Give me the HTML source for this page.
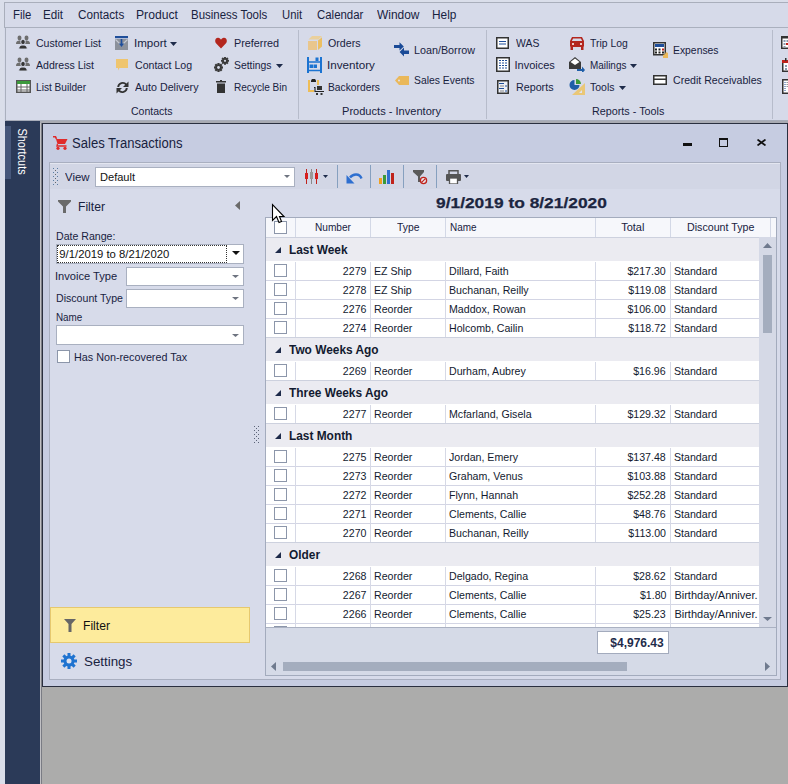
<!DOCTYPE html><html><head><meta charset="utf-8"><style>
html,body{margin:0;padding:0;width:788px;height:784px;overflow:hidden;background:#dfe3ef;}
body{position:relative;font-family:"Liberation Sans",sans-serif;}
.t{position:absolute;white-space:nowrap;}
.r{position:absolute;box-sizing:border-box;}
</style></head><body>
<div class="r" style="left:0px;top:0px;width:788px;height:784px;background:#dadeea"></div>
<div class="r" style="left:4px;top:2px;width:784px;height:119px;background:#d6dae9"></div>
<div class="r" style="left:4px;top:2px;width:784px;height:1px;background:#a9aebb"></div>
<div class="r" style="left:4px;top:2px;width:1px;height:25px;background:#a9aebb"></div>
<div class="r" style="left:4px;top:27px;width:784px;height:1px;background:#aab0be"></div>
<div class="r" style="left:5px;top:27px;width:1px;height:94px;background:#aab0be"></div>
<div class="r" style="left:5px;top:120px;width:783px;height:1px;background:#a8adba"></div>
<div class="t" style="left:12.59px;transform-origin:0 0;top:9.00px;font-size:12.5px;line-height:12.5px;font-weight:normal;color:#18223f;transform:scaleX(0.9067);">File</div>
<div class="t" style="left:43.27px;transform-origin:0 0;top:9.00px;font-size:12.5px;line-height:12.5px;font-weight:normal;color:#18223f;transform:scaleX(0.9304);">Edit</div>
<div class="t" style="left:77.60px;transform-origin:0 0;top:9.00px;font-size:12.5px;line-height:12.5px;font-weight:normal;color:#18223f;transform:scaleX(0.9373);">Contacts</div>
<div class="t" style="left:136.43px;transform-origin:0 0;top:9.00px;font-size:12.5px;line-height:12.5px;font-weight:normal;color:#18223f;transform:scaleX(0.9717);">Product</div>
<div class="t" style="left:191.48px;transform-origin:0 0;top:9.00px;font-size:12.5px;line-height:12.5px;font-weight:normal;color:#18223f;transform:scaleX(0.9169);">Business Tools</div>
<div class="t" style="left:282.00px;transform-origin:0 0;top:9.00px;font-size:12.5px;line-height:12.5px;font-weight:normal;color:#18223f;transform:scaleX(0.9009);">Unit</div>
<div class="t" style="left:316.80px;transform-origin:0 0;top:9.00px;font-size:12.5px;line-height:12.5px;font-weight:normal;color:#18223f;transform:scaleX(0.9137);">Calendar</div>
<div class="t" style="left:376.50px;transform-origin:0 0;top:9.00px;font-size:12.5px;line-height:12.5px;font-weight:normal;color:#18223f;transform:scaleX(0.9553);">Window</div>
<div class="t" style="left:432.45px;transform-origin:0 0;top:9.00px;font-size:12.5px;line-height:12.5px;font-weight:normal;color:#18223f;transform:scaleX(0.9493);">Help</div>
<div class="t" style="left:35.60px;transform-origin:0 0;top:38.00px;font-size:11px;line-height:11px;font-weight:normal;color:#18223f;transform:scaleX(0.9587);">Customer List</div>
<div class="t" style="left:35.60px;transform-origin:0 0;top:60.00px;font-size:11px;line-height:11px;font-weight:normal;color:#18223f;transform:scaleX(0.9591);">Address List</div>
<div class="t" style="left:35.60px;transform-origin:0 0;top:82.00px;font-size:11px;line-height:11px;font-weight:normal;color:#18223f;transform:scaleX(0.9205);">List Builder</div>
<div class="t" style="left:133.75px;transform-origin:0 0;top:38.00px;font-size:11px;line-height:11px;font-weight:normal;color:#18223f;transform:scaleX(1.0525);">Import</div>
<div class="t" style="left:135.00px;transform-origin:0 0;top:60.00px;font-size:11px;line-height:11px;font-weight:normal;color:#18223f;transform:scaleX(0.9628);">Contact Log</div>
<div class="t" style="left:135.00px;transform-origin:0 0;top:82.00px;font-size:11px;line-height:11px;font-weight:normal;color:#18223f;transform:scaleX(0.9710);">Auto Delivery</div>
<div class="t" style="left:233.80px;transform-origin:0 0;top:38.00px;font-size:11px;line-height:11px;font-weight:normal;color:#18223f;transform:scaleX(0.9839);">Preferred</div>
<div class="t" style="left:234.00px;transform-origin:0 0;top:60.00px;font-size:11px;line-height:11px;font-weight:normal;color:#18223f;transform:scaleX(0.9442);">Settings</div>
<div class="t" style="left:234.00px;transform-origin:0 0;top:82.00px;font-size:11px;line-height:11px;font-weight:normal;color:#18223f;transform:scaleX(0.9144);">Recycle Bin</div>
<div class="t" style="left:327.60px;transform-origin:0 0;top:38.00px;font-size:11px;line-height:11px;font-weight:normal;color:#18223f;transform:scaleX(0.9672);">Orders</div>
<div class="t" style="left:326.54px;transform-origin:0 0;top:60.00px;font-size:11px;line-height:11px;font-weight:normal;color:#18223f;transform:scaleX(1.0593);">Inventory</div>
<div class="t" style="left:327.60px;transform-origin:0 0;top:82.00px;font-size:11px;line-height:11px;font-weight:normal;color:#18223f;transform:scaleX(0.9335);">Backorders</div>
<div class="t" style="left:414.40px;transform-origin:0 0;top:45.00px;font-size:11px;line-height:11px;font-weight:normal;color:#18223f;transform:scaleX(0.9772);">Loan/Borrow</div>
<div class="t" style="left:414.40px;transform-origin:0 0;top:75.00px;font-size:11px;line-height:11px;font-weight:normal;color:#18223f;transform:scaleX(0.9428);">Sales Events</div>
<div class="t" style="left:515.50px;transform-origin:0 0;top:38.00px;font-size:11px;line-height:11px;font-weight:normal;color:#18223f;transform:scaleX(0.9461);">WAS</div>
<div class="t" style="left:514.50px;transform-origin:0 0;top:60.00px;font-size:11px;line-height:11px;font-weight:normal;color:#18223f;">Invoices</div>
<div class="t" style="left:515.50px;transform-origin:0 0;top:82.00px;font-size:11px;line-height:11px;font-weight:normal;color:#18223f;transform:scaleX(0.9740);">Reports</div>
<div class="t" style="left:589.60px;transform-origin:0 0;top:38.00px;font-size:11px;line-height:11px;font-weight:normal;color:#18223f;transform:scaleX(0.9441);">Trip Log</div>
<div class="t" style="left:589.60px;transform-origin:0 0;top:60.00px;font-size:11px;line-height:11px;font-weight:normal;color:#18223f;transform:scaleX(0.9009);">Mailings</div>
<div class="t" style="left:589.60px;transform-origin:0 0;top:82.00px;font-size:11px;line-height:11px;font-weight:normal;color:#18223f;transform:scaleX(0.9550);">Tools</div>
<div class="t" style="left:672.50px;transform-origin:0 0;top:45.00px;font-size:11px;line-height:11px;font-weight:normal;color:#18223f;transform:scaleX(0.9425);">Expenses</div>
<div class="t" style="left:672.50px;transform-origin:0 0;top:75.00px;font-size:11px;line-height:11px;font-weight:normal;color:#18223f;transform:scaleX(0.9621);">Credit Receivables</div>
<svg class="r" style="left:170px;top:42px" width="7" height="4" viewBox="0 0 7 4"><path d="M0 0h7L3.5 4z" fill="#1e2b4a"/></svg>
<svg class="r" style="left:276px;top:64px" width="7" height="4" viewBox="0 0 7 4"><path d="M0 0h7L3.5 4z" fill="#1e2b4a"/></svg>
<svg class="r" style="left:630px;top:64px" width="7" height="4" viewBox="0 0 7 4"><path d="M0 0h7L3.5 4z" fill="#1e2b4a"/></svg>
<svg class="r" style="left:619px;top:86px" width="7" height="4" viewBox="0 0 7 4"><path d="M0 0h7L3.5 4z" fill="#1e2b4a"/></svg>
<div class="t" style="left:131.00px;transform-origin:0 0;top:106.00px;font-size:11px;line-height:11px;font-weight:normal;color:#18223f;transform:scaleX(0.9565);">Contacts</div>
<div class="t" style="left:341.50px;transform-origin:0 0;top:106.00px;font-size:11px;line-height:11px;font-weight:normal;color:#18223f;transform:scaleX(1.0058);">Products - Inventory</div>
<div class="t" style="left:592.40px;transform-origin:0 0;top:106.00px;font-size:11px;line-height:11px;font-weight:normal;color:#18223f;transform:scaleX(0.9803);">Reports - Tools</div>
<div class="r" style="left:298px;top:30px;width:1px;height:89px;background:#b7bccb"></div>
<div class="r" style="left:486px;top:30px;width:1px;height:89px;background:#b7bccb"></div>
<div class="r" style="left:772px;top:30px;width:1px;height:89px;background:#b7bccb"></div>
<svg class="r" style="left:15px;top:35px" width="16" height="15" viewBox="0 0 16 15"><ellipse cx="4.5" cy="3" rx="2" ry="2.4" fill="#6e6e6e"/><path d="M1 9C1 6.5 2.5 5.6 4.5 5.6S8 6.5 8 9Z" fill="#6e6e6e"/>
<ellipse cx="11.5" cy="3" rx="2" ry="2.4" fill="#6e6e6e"/><path d="M8 9C8 6.5 9.5 5.6 11.5 5.6S15 6.5 15 9Z" fill="#6e6e6e"/>
<g stroke="#d6dae9" stroke-width="0.9"><ellipse cx="8" cy="7" rx="2.3" ry="2.6" fill="#353535"/><path d="M3.8 14C3.8 11 5.5 10 8 10S12.2 11 12.2 14Z" fill="#353535"/></g></svg>
<svg class="r" style="left:15px;top:57px" width="16" height="15" viewBox="0 0 16 15"><ellipse cx="4.5" cy="3" rx="2" ry="2.4" fill="#6e6e6e"/><path d="M1 9C1 6.5 2.5 5.6 4.5 5.6S8 6.5 8 9Z" fill="#6e6e6e"/>
<ellipse cx="11.5" cy="3" rx="2" ry="2.4" fill="#6e6e6e"/><path d="M8 9C8 6.5 9.5 5.6 11.5 5.6S15 6.5 15 9Z" fill="#6e6e6e"/>
<g stroke="#d6dae9" stroke-width="0.9"><ellipse cx="8" cy="7" rx="2.3" ry="2.6" fill="#353535"/><path d="M3.8 14C3.8 11 5.5 10 8 10S12.2 11 12.2 14Z" fill="#353535"/></g></svg>
<svg class="r" style="left:16px;top:80px" width="15" height="13" viewBox="0 0 15 13"><rect x="0.75" y="0.75" width="13.5" height="11.5" fill="#fff" stroke="#555" stroke-width="1.5"/><rect x="1" y="1" width="13" height="3" fill="#3d9a3d"/><path d="M1 7h13M1 10h13M5 4v8M11 4v8" stroke="#666" stroke-width="1"/></svg>
<svg class="r" style="left:115px;top:36px" width="13" height="14" viewBox="0 0 13 14"><rect x="0" y="0" width="13" height="2.2" fill="#1f4e9a"/><rect x="0" y="3" width="13" height="11" fill="#8c919b"/><path d="M0.5 3.5L6.5 9.5 12.5 3.5" stroke="#c5c9d2" stroke-width="1.2" fill="none"/><path d="M6.5 3v6" stroke="#1f4e9a" stroke-width="1.6"/><path d="M3.8 7.5h5.4L6.5 11z" fill="#1f4e9a"/></svg>
<svg class="r" style="left:116px;top:59px" width="12" height="12" viewBox="0 0 12 12"><path d="M0 0h12v9H3.5l-1.5 2.5V9H0z" fill="#efc56f"/></svg>
<svg class="r" style="left:116px;top:81px" width="13" height="13" viewBox="0 0 13 13"><g fill="none" stroke="#333" stroke-width="1.9"><path d="M2.2 6A4.5 4.5 0 0 1 10.2 3.6"/><path d="M10.8 7A4.5 4.5 0 0 1 2.8 9.4"/></g><path d="M12.5 0.5V6H7z" fill="#333"/><path d="M0.5 12.5V7H6z" fill="#333"/></svg>
<svg class="r" style="left:215px;top:37px" width="12" height="12" viewBox="0 0 12 12"><path d="M6 11.5L1 6.2C-0.5 4.5 0 1 3 0.8 4.5 0.7 5.5 1.8 6 2.8 6.5 1.8 7.5 0.7 9 0.8 12 1 12.5 4.5 11 6.2z" fill="#b3261e"/></svg>
<svg class="r" style="left:214px;top:57px" width="15" height="15" viewBox="0 0 15 15"><circle cx="4.5" cy="10.5" r="3.3" fill="#3a3a3a"/><rect x="3.4" y="6.0" width="2.2" height="2.2" fill="#3a3a3a" transform="rotate(0.0 4.5 10.5)"/><rect x="3.4" y="6.0" width="2.2" height="2.2" fill="#3a3a3a" transform="rotate(45.0 4.5 10.5)"/><rect x="3.4" y="6.0" width="2.2" height="2.2" fill="#3a3a3a" transform="rotate(90.0 4.5 10.5)"/><rect x="3.4" y="6.0" width="2.2" height="2.2" fill="#3a3a3a" transform="rotate(135.0 4.5 10.5)"/><rect x="3.4" y="6.0" width="2.2" height="2.2" fill="#3a3a3a" transform="rotate(180.0 4.5 10.5)"/><rect x="3.4" y="6.0" width="2.2" height="2.2" fill="#3a3a3a" transform="rotate(225.0 4.5 10.5)"/><rect x="3.4" y="6.0" width="2.2" height="2.2" fill="#3a3a3a" transform="rotate(270.0 4.5 10.5)"/><rect x="3.4" y="6.0" width="2.2" height="2.2" fill="#3a3a3a" transform="rotate(315.0 4.5 10.5)"/><circle cx="4.5" cy="10.5" r="1.4" fill="#d6dae9"/><circle cx="11" cy="3.8" r="2.9" fill="#3a3a3a"/><rect x="10.05" y="-0.20000000000000018" width="1.9" height="2.1" fill="#3a3a3a" transform="rotate(0.0 11 3.8)"/><rect x="10.05" y="-0.20000000000000018" width="1.9" height="2.1" fill="#3a3a3a" transform="rotate(45.0 11 3.8)"/><rect x="10.05" y="-0.20000000000000018" width="1.9" height="2.1" fill="#3a3a3a" transform="rotate(90.0 11 3.8)"/><rect x="10.05" y="-0.20000000000000018" width="1.9" height="2.1" fill="#3a3a3a" transform="rotate(135.0 11 3.8)"/><rect x="10.05" y="-0.20000000000000018" width="1.9" height="2.1" fill="#3a3a3a" transform="rotate(180.0 11 3.8)"/><rect x="10.05" y="-0.20000000000000018" width="1.9" height="2.1" fill="#3a3a3a" transform="rotate(225.0 11 3.8)"/><rect x="10.05" y="-0.20000000000000018" width="1.9" height="2.1" fill="#3a3a3a" transform="rotate(270.0 11 3.8)"/><rect x="10.05" y="-0.20000000000000018" width="1.9" height="2.1" fill="#3a3a3a" transform="rotate(315.0 11 3.8)"/><circle cx="11" cy="3.8" r="1.1" fill="#d6dae9"/></svg>
<svg class="r" style="left:216px;top:80px" width="10" height="13" viewBox="0 0 10 13"><rect x="0" y="1" width="10" height="1.5" fill="#333"/><rect x="4" y="0" width="2" height="1" fill="#333"/><rect x="1" y="3.5" width="8" height="9.5" fill="#333"/></svg>
<svg class="r" style="left:308px;top:36px" width="14" height="14" viewBox="0 0 14 14"><path d="M0.5 3.6L4 0H14L10.5 3.6Z" fill="#ead09c"/><rect x="0" y="5" width="9" height="9" fill="#e9c68c"/><path d="M10 4.6L14 1.3V10.5L10 14Z" fill="#ecbf62"/></svg>
<svg class="r" style="left:307px;top:57px" width="15" height="16" viewBox="0 0 15 16"><path d="M1 0v16M14 0v16" stroke="#1b73d1" stroke-width="2"/><path d="M1 5h13M1 13.5h13" stroke="#1b73d1" stroke-width="1.7"/><rect x="8.5" y="0.5" width="3" height="3.5" fill="#1b73d1"/><rect x="2.5" y="7.5" width="3.5" height="3.5" fill="#1b73d1"/><rect x="6.5" y="7.5" width="3.5" height="3.5" fill="#1b73d1"/></svg>
<svg class="r" style="left:308px;top:79px" width="16" height="17" viewBox="0 0 16 17"><path d="M0 1h2v12H0zM0 11h6v2H0zM9 1h2v5H9z" fill="#eebd57"/><path d="M3 3h5V1.6L7 0H4L3 1.6z" fill="#222"/><path d="M6 8.5h1v4h9" stroke="#222" stroke-width="1.1" fill="none"/><rect x="9" y="7" width="5" height="4" fill="#333"/><rect x="8" y="14" width="2" height="2" fill="#333"/><rect x="12.5" y="14" width="2" height="2" fill="#333"/></svg>
<svg class="r" style="left:394px;top:42px" width="15" height="15" viewBox="0 0 15 15"><path d="M0 3H5.5V0.3L9.8 4.6 5.5 8.6V6H0z" fill="#1a4a97"/><path d="M15 8.6H10V5.6L5.6 10 10 14.4V12H15z" fill="#1a4a97"/></svg>
<svg class="r" style="left:395px;top:76px" width="14" height="9" viewBox="0 0 14 9"><path d="M0 4.5L4 0h10v9H4z" fill="#eab85a"/><circle cx="4" cy="4.5" r="1" fill="#dfe3ef"/></svg>
<svg class="r" style="left:496px;top:37px" width="13" height="12" viewBox="0 0 13 12"><rect x="0.75" y="0.75" width="11.5" height="10.5" fill="#fff" stroke="#333" stroke-width="1.5"/><path d="M3 4.5h7M3 7h7" stroke="#1f4e9a" stroke-width="1.2"/></svg>
<svg class="r" style="left:496px;top:57px" width="14" height="15" viewBox="0 0 14 15"><rect x="0.75" y="0.75" width="12.5" height="13.5" fill="#fff" stroke="#333" stroke-width="1.5"/><path d="M3 3.5h8M3 6h8M3 8.5h8M3 11h8" stroke="#1f4e9a" stroke-width="1.1" stroke-dasharray="2 1"/></svg>
<svg class="r" style="left:497px;top:80px" width="12" height="14" viewBox="0 0 12 14"><rect x="0.75" y="0.75" width="10.5" height="12.5" fill="#eef0f6" stroke="#333" stroke-width="1.5"/><path d="M2 3.5h5M2 8.5h5M8 6h2M8 11h2" stroke="#1f4e9a" stroke-width="1.2"/><path d="M3 6h4M3 11h4" stroke="#888" stroke-width="1.1"/></svg>
<svg class="r" style="left:570px;top:37px" width="14" height="13" viewBox="0 0 14 13"><path d="M2.5 0.8h9l2 4H0.5z" fill="none" stroke="#b3261e" stroke-width="1.6"/><rect x="0" y="4.5" width="14" height="5.5" rx="1" fill="#b3261e"/><rect x="0.5" y="10" width="2.5" height="3" fill="#b3261e"/><rect x="11" y="10" width="2.5" height="3" fill="#b3261e"/><circle cx="3" cy="7" r="1" fill="#fff"/><circle cx="11" cy="7" r="1" fill="#fff"/></svg>
<svg class="r" style="left:569px;top:57px" width="16" height="15" viewBox="0 0 16 15"><path d="M0 5L6 0l6 5v7H0z" fill="#3a3a3a"/><path d="M1.5 5L6 1.5 10.5 5 6 8z" fill="#fff"/><path d="M8 12h5v-2.5l3 3.5-3 3.5V14H8z" fill="#1f5ea8"/></svg>
<svg class="r" style="left:569px;top:79px" width="16" height="16" viewBox="0 0 16 16"><path d="M5.5 1a5 5 0 1 0 5 5h-5z" fill="#1f5ea8"/><path d="M7 0a5 5 0 0 1 5 5H7z" fill="#3a9a3a"/><path d="M16 4v12H3z" fill="#eac777"/><path d="M13 11v3h-3z" fill="#dfe3ef"/></svg>
<svg class="r" style="left:653px;top:42px" width="15" height="16" viewBox="0 0 15 16"><rect x="0.75" y="0.75" width="11.5" height="12" fill="#fff" stroke="#333" stroke-width="1.5"/><rect x="2" y="2" width="9" height="3" fill="#1f4e9a"/><rect x="2" y="6.5" width="2" height="2" fill="#222"/><rect x="5.5" y="6.5" width="2" height="2" fill="#222"/><rect x="9" y="6.5" width="2" height="2" fill="#c0231b"/><rect x="2" y="9.5" width="2" height="2" fill="#222"/><rect x="5.5" y="9.5" width="2" height="2" fill="#222"/><rect x="9" y="9.5" width="2" height="2" fill="#222"/><path d="M10 16v-3l2-1 1-2 2 1v5z" fill="#eab85a"/></svg>
<svg class="r" style="left:653px;top:75px" width="14" height="10" viewBox="0 0 14 10"><rect x="0.75" y="0.75" width="12.5" height="8.5" fill="#fff" stroke="#333" stroke-width="1.5"/><rect x="1" y="3.5" width="12" height="1.5" fill="#333"/></svg>
<svg class="r" style="left:781px;top:36px" width="7" height="13" viewBox="0 0 7 13"><rect x="0.75" y="0.75" width="12" height="11.5" fill="#fff" stroke="#333" stroke-width="1.5"/><rect x="0" y="0" width="13" height="2.5" fill="#333"/><rect x="2.5" y="4" width="2" height="2" fill="#8a9ab0"/><rect x="5.5" y="4" width="2" height="2" fill="#8a9ab0"/><rect x="2.5" y="7" width="2" height="2" fill="#8a9ab0"/><rect x="5" y="7" width="3" height="2" fill="#c0231b"/><rect x="2.5" y="10" width="2" height="1.5" fill="#8a9ab0"/></svg>
<svg class="r" style="left:782px;top:58px" width="6" height="14" viewBox="0 0 6 14"><rect x="0.75" y="2.75" width="12" height="10.5" fill="#fff" stroke="#333" stroke-width="1.5"/><rect x="0" y="2" width="13" height="3" fill="#c0231b"/><rect x="3" y="0" width="1.5" height="3" fill="#333"/><rect x="3" y="7" width="2" height="2" fill="#8a9ab0"/><rect x="3" y="10" width="2" height="2" fill="#8a9ab0"/></svg>
<svg class="r" style="left:782px;top:79px" width="6" height="15" viewBox="0 0 6 15"><rect x="0.75" y="0.75" width="12" height="13.5" fill="#fff" stroke="#333" stroke-width="1.5"/><path d="M2.5 3.5h1M2.5 5.5h1M2.5 7.5h1M2.5 9.5h1M2.5 11.5h1" stroke="#1f4e9a" stroke-width="1.2"/><path d="M4.5 3.5h3M4.5 5.5h3M4.5 7.5h3" stroke="#999" stroke-width="1"/></svg>
<div class="r" style="left:5px;top:121px;width:35px;height:663px;background:#2b3a58"></div>
<div class="r" style="left:5px;top:126px;width:6px;height:53px;background:#46577a"></div>
<div class="t" style="left:0;top:0;font-size:12px;line-height:12px;color:#fff;transform-origin:0 0;transform:translate(28px,128.5px) rotate(90deg) scaleX(0.91);">Shortcuts</div>
<div class="r" style="left:40px;top:121px;width:1px;height:663px;background:#c0c0c4"></div>
<div class="r" style="left:41px;top:121px;width:1px;height:663px;background:#7a7c84"></div>
<div class="r" style="left:42px;top:687px;width:746px;height:97px;background:#acacab"></div>
<div class="r" style="left:42px;top:123px;width:746px;height:564px;background:#2a2f3f"></div>
<div class="r" style="left:43px;top:124px;width:744px;height:562px;background:#c6cce1"></div>
<div class="r" style="left:40px;top:121px;width:748px;height:2px;background:#a8aab2"></div>
<svg class="r" style="left:53px;top:136px" width="15" height="14" viewBox="0 0 15 14"><path d="M0 0.8h2.5l1 2" stroke="#e02a2a" stroke-width="1.6" fill="none"/><path d="M3 3h11.5l-2.5 5H4.5z" fill="#e02a2a"/><path d="M4.5 8l-0.5 2h9.5" stroke="#e02a2a" stroke-width="1.4" fill="none"/><circle cx="5" cy="12.3" r="1.6" fill="#e02a2a"/><circle cx="12" cy="12.3" r="1.6" fill="#e02a2a"/></svg>
<div class="t" style="left:72.20px;transform-origin:0 0;top:136.00px;font-size:14px;line-height:14px;font-weight:normal;color:#18223f;transform:scaleX(0.9339);">Sales Transactions</div>
<div class="r" style="left:683px;top:143px;width:9px;height:3px;background:#111"></div>
<div class="r" style="left:719px;top:138px;width:9px;height:9px;border:2px solid #111;border-width:2px 1.5px 1.5px 1.5px"></div>
<svg class="r" style="left:757px;top:139px" width="9" height="7" viewBox="0 0 9 7"><path d="M0.5 0.5l8 6M8.5 0.5l-8 6" stroke="#111" stroke-width="1.7"/></svg>
<div class="r" style="left:49px;top:162px;width:732px;height:518px;background:#d7dbea;border:1px solid #a9afc0"></div>
<div class="r" style="left:50px;top:163px;width:730px;height:1px;background:#e3e6f0"></div>
<div class="r" style="left:50px;top:164px;width:730px;height:25px;background:#d2d6e5"></div>
<div class="r" style="left:53px;top:168px;width:1px;height:1px;background:#5a7da3"></div>
<div class="r" style="left:57px;top:168px;width:1px;height:1px;background:#5a7da3"></div>
<div class="r" style="left:53px;top:172px;width:1px;height:1px;background:#5a7da3"></div>
<div class="r" style="left:57px;top:172px;width:1px;height:1px;background:#5a7da3"></div>
<div class="r" style="left:53px;top:176px;width:1px;height:1px;background:#5a7da3"></div>
<div class="r" style="left:57px;top:176px;width:1px;height:1px;background:#5a7da3"></div>
<div class="r" style="left:53px;top:180px;width:1px;height:1px;background:#5a7da3"></div>
<div class="r" style="left:57px;top:180px;width:1px;height:1px;background:#5a7da3"></div>
<div class="r" style="left:53px;top:184px;width:1px;height:1px;background:#5a7da3"></div>
<div class="r" style="left:57px;top:184px;width:1px;height:1px;background:#5a7da3"></div>
<div class="r" style="left:55px;top:170px;width:1px;height:1px;background:#666"></div>
<div class="r" style="left:55px;top:174px;width:1px;height:1px;background:#666"></div>
<div class="r" style="left:55px;top:178px;width:1px;height:1px;background:#666"></div>
<div class="r" style="left:55px;top:182px;width:1px;height:1px;background:#666"></div>
<div class="t" style="left:65.10px;transform-origin:0 0;top:172.00px;font-size:11px;line-height:11px;font-weight:normal;color:#18223f;transform:scaleX(1.0380);">View</div>
<div class="r" style="left:95px;top:167px;width:200px;height:20px;background:#fff;border:1px solid #a9b0c0"></div>
<div class="t" style="left:99.60px;transform-origin:0 0;top:172.00px;font-size:11px;line-height:11px;font-weight:normal;color:#111;transform:scaleX(1.0058);">Default</div>
<svg class="r" style="left:284px;top:175px" width="6" height="3" viewBox="0 0 6 3"><path d="M0 0h6L3 3z" fill="#6e7480"/></svg>
<svg class="r" style="left:304px;top:169px" width="16" height="15" viewBox="0 0 16 15"><path d="M2.5 0v15M7.5 0v15M12.5 0v15" stroke="#c0231b" stroke-width="1"/><path d="M7.5 0v15" stroke="#8a8a8a" stroke-width="1"/><rect x="1" y="4" width="3" height="6" fill="#d62020"/><rect x="6" y="3" width="3" height="7" fill="#9a9a9a"/><rect x="11" y="4" width="3" height="6" fill="#d62020"/></svg>
<svg class="r" style="left:323px;top:175px" width="5" height="3" viewBox="0 0 5 3"><path d="M0 0h5L2.5 3z" fill="#1e2b4a"/></svg>
<div class="r" style="left:337px;top:165px;width:1px;height:23px;background:#86a0bf"></div>
<div class="r" style="left:370px;top:165px;width:1px;height:23px;background:#86a0bf"></div>
<div class="r" style="left:403px;top:165px;width:1px;height:23px;background:#86a0bf"></div>
<div class="r" style="left:436px;top:165px;width:1px;height:23px;background:#86a0bf"></div>
<svg class="r" style="left:346px;top:172px" width="17" height="12" viewBox="0 0 17 12"><path d="M4 5.5C7 1.5 13.5 1 15.5 6.5" stroke="#2e6fd0" stroke-width="2.4" fill="none"/><path d="M0.5 3v8.5h8z" fill="#2e6fd0"/></svg>
<svg class="r" style="left:379px;top:170px" width="16" height="14" viewBox="0 0 16 14"><rect x="0" y="8" width="3" height="6" fill="#f0a020"/><rect x="4" y="5" width="3" height="9" fill="#3a9a3a"/><rect x="8" y="0" width="3" height="14" fill="#2e6fd0"/><rect x="12" y="3" width="3" height="11" fill="#c0231b"/></svg>
<svg class="r" style="left:412px;top:170px" width="16" height="15" viewBox="0 0 16 15"><path d="M1 0H12V2L8 6.5V12H6V6.5L1 2Z" fill="#5a5a5a"/><circle cx="11.5" cy="10.5" r="3.1" fill="#e8eaf2" stroke="#c0231b" stroke-width="1.3"/><path d="M9.6 12.4l3.8-3.8" stroke="#c0231b" stroke-width="1.2"/></svg>
<svg class="r" style="left:446px;top:170px" width="15" height="14" viewBox="0 0 15 14"><rect x="3" y="0.75" width="9" height="4" fill="none" stroke="#555" stroke-width="1.5"/><rect x="0" y="4" width="15" height="7" rx="1" fill="#555"/><rect x="3.5" y="8" width="8" height="6" fill="#fff" stroke="#555" stroke-width="1.3"/></svg>
<svg class="r" style="left:464px;top:175px" width="5" height="3" viewBox="0 0 5 3"><path d="M0 0h5L2.5 3z" fill="#1e2b4a"/></svg>
<svg class="r" style="left:58px;top:200px" width="13" height="13" viewBox="0 0 13 13"><path d="M0 0H13V1.5L8 6.5V13H5V6.5L0 1.5Z" fill="#6a6a6a"/></svg>
<div class="t" style="left:77.67px;transform-origin:0 0;top:200.00px;font-size:13px;line-height:13px;font-weight:normal;color:#18223f;transform:scaleX(0.9349);">Filter</div>
<svg class="r" style="left:235px;top:201px" width="5" height="9" viewBox="0 0 5 9"><path d="M5 0v9L0 4.5z" fill="#6a6a6a"/></svg>
<div class="t" style="left:56.10px;transform-origin:0 0;top:231.00px;font-size:11px;line-height:11px;font-weight:normal;color:#18223f;transform:scaleX(0.9626);">Date Range:</div>
<div class="r" style="left:56px;top:244px;width:188px;height:20px;background:#fff;border:1px solid #a9b0c0"></div>
<div class="r" style="left:57px;top:245px;width:170px;height:18px;border:1px dotted #333"></div>
<div class="t" style="left:59.30px;transform-origin:0 0;top:249.00px;font-size:11.3px;line-height:11.3px;font-weight:normal;color:#111;">9/1/2019 to 8/21/2020</div>
<svg class="r" style="left:232px;top:251px" width="8" height="4" viewBox="0 0 8 4"><path d="M0 0h8L4 4z" fill="#111"/></svg>
<div class="t" style="left:54.99px;transform-origin:0 0;top:271.00px;font-size:11px;line-height:11px;font-weight:normal;color:#18223f;transform:scaleX(1.0109);">Invoice Type</div>
<div class="r" style="left:126px;top:267px;width:118px;height:19px;background:#fff;border:1px solid #a9b0c0"></div>
<svg class="r" style="left:232px;top:275px" width="7" height="3" viewBox="0 0 7 3"><path d="M0 0h7L3.5 3z" fill="#6e7480"/></svg>
<div class="t" style="left:56.00px;transform-origin:0 0;top:293.00px;font-size:11px;line-height:11px;font-weight:normal;color:#18223f;transform:scaleX(0.9629);">Discount Type</div>
<div class="r" style="left:126px;top:289px;width:118px;height:19px;background:#fff;border:1px solid #a9b0c0"></div>
<svg class="r" style="left:232px;top:297px" width="7" height="3" viewBox="0 0 7 3"><path d="M0 0h7L3.5 3z" fill="#6e7480"/></svg>
<div class="t" style="left:56.00px;transform-origin:0 0;top:312.00px;font-size:11px;line-height:11px;font-weight:normal;color:#18223f;transform:scaleX(0.8965);">Name</div>
<div class="r" style="left:56px;top:325px;width:188px;height:20px;background:#fff;border:1px solid #a9b0c0"></div>
<svg class="r" style="left:232px;top:334px" width="7" height="3" viewBox="0 0 7 3"><path d="M0 0h7L3.5 3z" fill="#6e7480"/></svg>
<div class="r" style="left:57px;top:350px;width:13px;height:13px;background:#fff;border:1px solid #8c96aa"></div>
<div class="t" style="left:73.60px;transform-origin:0 0;top:352.00px;font-size:11px;line-height:11px;font-weight:normal;color:#18223f;transform:scaleX(0.9798);">Has Non-recovered Tax</div>
<div class="r" style="left:254px;top:426px;width:1px;height:1px;background:#5c6478"></div>
<div class="r" style="left:258px;top:426px;width:1px;height:1px;background:#5c6478"></div>
<div class="r" style="left:254px;top:430px;width:1px;height:1px;background:#5c6478"></div>
<div class="r" style="left:258px;top:430px;width:1px;height:1px;background:#5c6478"></div>
<div class="r" style="left:254px;top:434px;width:1px;height:1px;background:#5c6478"></div>
<div class="r" style="left:258px;top:434px;width:1px;height:1px;background:#5c6478"></div>
<div class="r" style="left:254px;top:438px;width:1px;height:1px;background:#5c6478"></div>
<div class="r" style="left:258px;top:438px;width:1px;height:1px;background:#5c6478"></div>
<div class="r" style="left:254px;top:442px;width:1px;height:1px;background:#5c6478"></div>
<div class="r" style="left:258px;top:442px;width:1px;height:1px;background:#5c6478"></div>
<div class="r" style="left:256px;top:428px;width:1px;height:1px;background:#5c6478"></div>
<div class="r" style="left:256px;top:432px;width:1px;height:1px;background:#5c6478"></div>
<div class="r" style="left:256px;top:436px;width:1px;height:1px;background:#5c6478"></div>
<div class="r" style="left:256px;top:440px;width:1px;height:1px;background:#5c6478"></div>
<div class="r" style="left:50px;top:607px;width:200px;height:36px;background:#fdeb9c;border:1px solid #e6c86e"></div>
<svg class="r" style="left:64px;top:619px" width="12" height="13" viewBox="0 0 12 13"><path d="M0 0h12L7.5 5v8H4.5V5z" fill="#666"/></svg>
<div class="t" style="left:82.97px;transform-origin:0 0;top:619.00px;font-size:13px;line-height:13px;font-weight:normal;color:#111;transform:scaleX(0.9349);">Filter</div>
<svg class="r" style="left:61px;top:653px" width="16" height="16" viewBox="0 0 16 16"><g fill="#1f73d0"><circle cx="8" cy="8" r="5.5"/><rect x="6.5" y="0" width="3" height="16"/><rect x="0" y="6.5" width="16" height="3"/><rect x="6.5" y="0" width="3" height="16" transform="rotate(45 8 8)"/><rect x="6.5" y="0" width="3" height="16" transform="rotate(-45 8 8)"/></g><circle cx="8" cy="8" r="2.5" fill="#dde1ee"/></svg>
<div class="t" style="left:83.50px;transform-origin:0 0;top:655.00px;font-size:13.5px;line-height:13.5px;font-weight:normal;color:#18223f;transform:scaleX(0.9872);">Settings</div>
<div class="t" style="left:435.50px;transform-origin:0 0;top:195.00px;font-size:15px;line-height:15px;font-weight:bold;color:#1c2540;transform:scaleX(1.1577);-webkit-text-stroke:0.25px #1c2540">9/1/2019 to 8/21/2020</div>
<div class="r" style="left:265px;top:217px;width:512px;height:459px;background:#d5dae7;border:1px solid #a3abbd"></div>
<div class="r" style="left:266px;top:218px;width:510px;height:19px;background:#f6f7fb"></div>
<div class="r" style="left:266px;top:237px;width:510px;height:1px;background:#c9cede"></div>
<div class="r" style="left:295px;top:218px;width:1px;height:19px;background:#d3d8e6"></div>
<div class="r" style="left:370px;top:218px;width:1px;height:19px;background:#d3d8e6"></div>
<div class="r" style="left:445px;top:218px;width:1px;height:19px;background:#d3d8e6"></div>
<div class="r" style="left:595px;top:218px;width:1px;height:19px;background:#d3d8e6"></div>
<div class="r" style="left:670px;top:218px;width:1px;height:19px;background:#d3d8e6"></div>
<div class="r" style="left:770px;top:218px;width:1px;height:19px;background:#d3d8e6"></div>
<div class="r" style="left:274px;top:221px;width:13px;height:13px;background:#fff;border:1px solid #8c96aa"></div>
<div class="t" style="left:314.50px;transform-origin:0 0;top:222.00px;font-size:11px;line-height:11px;font-weight:normal;color:#18223f;transform:scaleX(0.9199);">Number</div>
<div class="t" style="left:396.50px;transform-origin:0 0;top:222.00px;font-size:11px;line-height:11px;font-weight:normal;color:#18223f;transform:scaleX(0.9397);">Type</div>
<div class="t" style="left:449.60px;transform-origin:0 0;top:222.00px;font-size:11px;line-height:11px;font-weight:normal;color:#18223f;transform:scaleX(0.9033);">Name</div>
<div class="t" style="left:621.20px;transform-origin:0 0;top:222.00px;font-size:11px;line-height:11px;font-weight:normal;color:#18223f;">Total</div>
<div class="t" style="left:686.80px;transform-origin:0 0;top:222.00px;font-size:11px;line-height:11px;font-weight:normal;color:#18223f;transform:scaleX(0.9686);">Discount Type</div>
<div class="r" style="left:266px;top:237px;width:494px;height:390px;overflow:hidden">
<div class="r" style="left:0px;top:0px;width:494px;height:24px;background:#ebebf1"></div>
<div class="r" style="left:0px;top:24px;width:494px;height:19px;background:#fff"></div>
<div class="r" style="left:0px;top:43px;width:494px;height:19px;background:#fff"></div>
<div class="r" style="left:0px;top:62px;width:494px;height:19px;background:#fff"></div>
<div class="r" style="left:0px;top:81px;width:494px;height:19px;background:#fff"></div>
<div class="r" style="left:0px;top:100px;width:494px;height:24px;background:#ebebf1"></div>
<div class="r" style="left:0px;top:124px;width:494px;height:19px;background:#fff"></div>
<div class="r" style="left:0px;top:143px;width:494px;height:24px;background:#ebebf1"></div>
<div class="r" style="left:0px;top:167px;width:494px;height:19px;background:#fff"></div>
<div class="r" style="left:0px;top:186px;width:494px;height:24px;background:#ebebf1"></div>
<div class="r" style="left:0px;top:210px;width:494px;height:19px;background:#fff"></div>
<div class="r" style="left:0px;top:229px;width:494px;height:19px;background:#fff"></div>
<div class="r" style="left:0px;top:248px;width:494px;height:19px;background:#fff"></div>
<div class="r" style="left:0px;top:267px;width:494px;height:19px;background:#fff"></div>
<div class="r" style="left:0px;top:286px;width:494px;height:19px;background:#fff"></div>
<div class="r" style="left:0px;top:305px;width:494px;height:24px;background:#ebebf1"></div>
<div class="r" style="left:0px;top:329px;width:494px;height:19px;background:#fff"></div>
<div class="r" style="left:0px;top:348px;width:494px;height:19px;background:#fff"></div>
<div class="r" style="left:0px;top:367px;width:494px;height:19px;background:#fff"></div>
<div class="r" style="left:0px;top:386px;width:494px;height:19px;background:#fff"></div>
<div class="r" style="left:0px;top:405px;width:494px;height:19px;background:#fff"></div>
<div class="r" style="left:0px;top:0px;width:494px;height:1px;background:#cdd1de"></div>
<div class="r" style="left:0px;top:43px;width:494px;height:1px;background:#d3d5e4"></div>
<div class="r" style="left:29px;top:25px;width:1px;height:19px;background:#d6d9e6"></div>
<div class="r" style="left:104px;top:25px;width:1px;height:19px;background:#d6d9e6"></div>
<div class="r" style="left:179px;top:25px;width:1px;height:19px;background:#d6d9e6"></div>
<div class="r" style="left:329px;top:25px;width:1px;height:19px;background:#d6d9e6"></div>
<div class="r" style="left:404px;top:25px;width:1px;height:19px;background:#d6d9e6"></div>
<div class="r" style="left:0px;top:62px;width:494px;height:1px;background:#d3d5e4"></div>
<div class="r" style="left:29px;top:44px;width:1px;height:19px;background:#d6d9e6"></div>
<div class="r" style="left:104px;top:44px;width:1px;height:19px;background:#d6d9e6"></div>
<div class="r" style="left:179px;top:44px;width:1px;height:19px;background:#d6d9e6"></div>
<div class="r" style="left:329px;top:44px;width:1px;height:19px;background:#d6d9e6"></div>
<div class="r" style="left:404px;top:44px;width:1px;height:19px;background:#d6d9e6"></div>
<div class="r" style="left:0px;top:81px;width:494px;height:1px;background:#d3d5e4"></div>
<div class="r" style="left:29px;top:63px;width:1px;height:19px;background:#d6d9e6"></div>
<div class="r" style="left:104px;top:63px;width:1px;height:19px;background:#d6d9e6"></div>
<div class="r" style="left:179px;top:63px;width:1px;height:19px;background:#d6d9e6"></div>
<div class="r" style="left:329px;top:63px;width:1px;height:19px;background:#d6d9e6"></div>
<div class="r" style="left:404px;top:63px;width:1px;height:19px;background:#d6d9e6"></div>
<div class="r" style="left:0px;top:100px;width:494px;height:1px;background:#d3d5e4"></div>
<div class="r" style="left:29px;top:82px;width:1px;height:19px;background:#d6d9e6"></div>
<div class="r" style="left:104px;top:82px;width:1px;height:19px;background:#d6d9e6"></div>
<div class="r" style="left:179px;top:82px;width:1px;height:19px;background:#d6d9e6"></div>
<div class="r" style="left:329px;top:82px;width:1px;height:19px;background:#d6d9e6"></div>
<div class="r" style="left:404px;top:82px;width:1px;height:19px;background:#d6d9e6"></div>
<div class="r" style="left:0px;top:100px;width:494px;height:1px;background:#cdd1de"></div>
<div class="r" style="left:0px;top:143px;width:494px;height:1px;background:#d3d5e4"></div>
<div class="r" style="left:29px;top:125px;width:1px;height:19px;background:#d6d9e6"></div>
<div class="r" style="left:104px;top:125px;width:1px;height:19px;background:#d6d9e6"></div>
<div class="r" style="left:179px;top:125px;width:1px;height:19px;background:#d6d9e6"></div>
<div class="r" style="left:329px;top:125px;width:1px;height:19px;background:#d6d9e6"></div>
<div class="r" style="left:404px;top:125px;width:1px;height:19px;background:#d6d9e6"></div>
<div class="r" style="left:0px;top:143px;width:494px;height:1px;background:#cdd1de"></div>
<div class="r" style="left:0px;top:186px;width:494px;height:1px;background:#d3d5e4"></div>
<div class="r" style="left:29px;top:168px;width:1px;height:19px;background:#d6d9e6"></div>
<div class="r" style="left:104px;top:168px;width:1px;height:19px;background:#d6d9e6"></div>
<div class="r" style="left:179px;top:168px;width:1px;height:19px;background:#d6d9e6"></div>
<div class="r" style="left:329px;top:168px;width:1px;height:19px;background:#d6d9e6"></div>
<div class="r" style="left:404px;top:168px;width:1px;height:19px;background:#d6d9e6"></div>
<div class="r" style="left:0px;top:186px;width:494px;height:1px;background:#cdd1de"></div>
<div class="r" style="left:0px;top:229px;width:494px;height:1px;background:#d3d5e4"></div>
<div class="r" style="left:29px;top:211px;width:1px;height:19px;background:#d6d9e6"></div>
<div class="r" style="left:104px;top:211px;width:1px;height:19px;background:#d6d9e6"></div>
<div class="r" style="left:179px;top:211px;width:1px;height:19px;background:#d6d9e6"></div>
<div class="r" style="left:329px;top:211px;width:1px;height:19px;background:#d6d9e6"></div>
<div class="r" style="left:404px;top:211px;width:1px;height:19px;background:#d6d9e6"></div>
<div class="r" style="left:0px;top:248px;width:494px;height:1px;background:#d3d5e4"></div>
<div class="r" style="left:29px;top:230px;width:1px;height:19px;background:#d6d9e6"></div>
<div class="r" style="left:104px;top:230px;width:1px;height:19px;background:#d6d9e6"></div>
<div class="r" style="left:179px;top:230px;width:1px;height:19px;background:#d6d9e6"></div>
<div class="r" style="left:329px;top:230px;width:1px;height:19px;background:#d6d9e6"></div>
<div class="r" style="left:404px;top:230px;width:1px;height:19px;background:#d6d9e6"></div>
<div class="r" style="left:0px;top:267px;width:494px;height:1px;background:#d3d5e4"></div>
<div class="r" style="left:29px;top:249px;width:1px;height:19px;background:#d6d9e6"></div>
<div class="r" style="left:104px;top:249px;width:1px;height:19px;background:#d6d9e6"></div>
<div class="r" style="left:179px;top:249px;width:1px;height:19px;background:#d6d9e6"></div>
<div class="r" style="left:329px;top:249px;width:1px;height:19px;background:#d6d9e6"></div>
<div class="r" style="left:404px;top:249px;width:1px;height:19px;background:#d6d9e6"></div>
<div class="r" style="left:0px;top:286px;width:494px;height:1px;background:#d3d5e4"></div>
<div class="r" style="left:29px;top:268px;width:1px;height:19px;background:#d6d9e6"></div>
<div class="r" style="left:104px;top:268px;width:1px;height:19px;background:#d6d9e6"></div>
<div class="r" style="left:179px;top:268px;width:1px;height:19px;background:#d6d9e6"></div>
<div class="r" style="left:329px;top:268px;width:1px;height:19px;background:#d6d9e6"></div>
<div class="r" style="left:404px;top:268px;width:1px;height:19px;background:#d6d9e6"></div>
<div class="r" style="left:0px;top:305px;width:494px;height:1px;background:#d3d5e4"></div>
<div class="r" style="left:29px;top:287px;width:1px;height:19px;background:#d6d9e6"></div>
<div class="r" style="left:104px;top:287px;width:1px;height:19px;background:#d6d9e6"></div>
<div class="r" style="left:179px;top:287px;width:1px;height:19px;background:#d6d9e6"></div>
<div class="r" style="left:329px;top:287px;width:1px;height:19px;background:#d6d9e6"></div>
<div class="r" style="left:404px;top:287px;width:1px;height:19px;background:#d6d9e6"></div>
<div class="r" style="left:0px;top:305px;width:494px;height:1px;background:#cdd1de"></div>
<div class="r" style="left:0px;top:348px;width:494px;height:1px;background:#d3d5e4"></div>
<div class="r" style="left:29px;top:330px;width:1px;height:19px;background:#d6d9e6"></div>
<div class="r" style="left:104px;top:330px;width:1px;height:19px;background:#d6d9e6"></div>
<div class="r" style="left:179px;top:330px;width:1px;height:19px;background:#d6d9e6"></div>
<div class="r" style="left:329px;top:330px;width:1px;height:19px;background:#d6d9e6"></div>
<div class="r" style="left:404px;top:330px;width:1px;height:19px;background:#d6d9e6"></div>
<div class="r" style="left:0px;top:367px;width:494px;height:1px;background:#d3d5e4"></div>
<div class="r" style="left:29px;top:349px;width:1px;height:19px;background:#d6d9e6"></div>
<div class="r" style="left:104px;top:349px;width:1px;height:19px;background:#d6d9e6"></div>
<div class="r" style="left:179px;top:349px;width:1px;height:19px;background:#d6d9e6"></div>
<div class="r" style="left:329px;top:349px;width:1px;height:19px;background:#d6d9e6"></div>
<div class="r" style="left:404px;top:349px;width:1px;height:19px;background:#d6d9e6"></div>
<div class="r" style="left:0px;top:386px;width:494px;height:1px;background:#d3d5e4"></div>
<div class="r" style="left:29px;top:368px;width:1px;height:19px;background:#d6d9e6"></div>
<div class="r" style="left:104px;top:368px;width:1px;height:19px;background:#d6d9e6"></div>
<div class="r" style="left:179px;top:368px;width:1px;height:19px;background:#d6d9e6"></div>
<div class="r" style="left:329px;top:368px;width:1px;height:19px;background:#d6d9e6"></div>
<div class="r" style="left:404px;top:368px;width:1px;height:19px;background:#d6d9e6"></div>
<div class="r" style="left:0px;top:405px;width:494px;height:1px;background:#d3d5e4"></div>
<div class="r" style="left:29px;top:387px;width:1px;height:19px;background:#d6d9e6"></div>
<div class="r" style="left:104px;top:387px;width:1px;height:19px;background:#d6d9e6"></div>
<div class="r" style="left:179px;top:387px;width:1px;height:19px;background:#d6d9e6"></div>
<div class="r" style="left:329px;top:387px;width:1px;height:19px;background:#d6d9e6"></div>
<div class="r" style="left:404px;top:387px;width:1px;height:19px;background:#d6d9e6"></div>
<div class="r" style="left:0px;top:424px;width:494px;height:1px;background:#d3d5e4"></div>
<div class="r" style="left:29px;top:406px;width:1px;height:19px;background:#d6d9e6"></div>
<div class="r" style="left:104px;top:406px;width:1px;height:19px;background:#d6d9e6"></div>
<div class="r" style="left:179px;top:406px;width:1px;height:19px;background:#d6d9e6"></div>
<div class="r" style="left:329px;top:406px;width:1px;height:19px;background:#d6d9e6"></div>
<div class="r" style="left:404px;top:406px;width:1px;height:19px;background:#d6d9e6"></div>
<svg class="r" style="left:9px;top:10px" width="6" height="6"><path d="M6 0v6H0z" fill="#1e2b4a"/></svg>
<div class="t" style="left:23.00px;transform-origin:0 0;top:7.00px;font-size:12px;line-height:12px;font-weight:bold;color:#121a30;transform:scaleX(0.9900);">Last Week</div>
<div class="r" style="left:8px;top:27px;width:13px;height:13px;background:#fff;border:1px solid #8c96aa"></div>
<div class="t" style="right:393.89px;transform-origin:100% 0;top:29.00px;font-size:11px;line-height:11px;font-weight:normal;color:#121a30;transform:scaleX(0.9650);">2279</div>
<div class="t" style="left:108.00px;transform-origin:0 0;top:29.00px;font-size:11px;line-height:11px;font-weight:normal;color:#121a30;transform:scaleX(0.9650);">EZ Ship</div>
<div class="t" style="left:183.00px;transform-origin:0 0;top:29.00px;font-size:11px;line-height:11px;font-weight:normal;color:#121a30;transform:scaleX(0.9650);">Dillard, Faith</div>
<div class="t" style="right:93.89px;transform-origin:100% 0;top:29.00px;font-size:11px;line-height:11px;font-weight:normal;color:#121a30;transform:scaleX(0.9650);">$217.30</div>
<div class="t" style="left:408.40px;transform-origin:0 0;top:29.00px;font-size:11px;line-height:11px;font-weight:normal;color:#121a30;transform:scaleX(0.9650);">Standard</div>
<div class="r" style="left:8px;top:46px;width:13px;height:13px;background:#fff;border:1px solid #8c96aa"></div>
<div class="t" style="right:393.89px;transform-origin:100% 0;top:48.00px;font-size:11px;line-height:11px;font-weight:normal;color:#121a30;transform:scaleX(0.9650);">2278</div>
<div class="t" style="left:108.00px;transform-origin:0 0;top:48.00px;font-size:11px;line-height:11px;font-weight:normal;color:#121a30;transform:scaleX(0.9650);">EZ Ship</div>
<div class="t" style="left:183.00px;transform-origin:0 0;top:48.00px;font-size:11px;line-height:11px;font-weight:normal;color:#121a30;transform:scaleX(0.9650);">Buchanan, Reilly</div>
<div class="t" style="right:93.89px;transform-origin:100% 0;top:48.00px;font-size:11px;line-height:11px;font-weight:normal;color:#121a30;transform:scaleX(0.9650);">$119.08</div>
<div class="t" style="left:408.40px;transform-origin:0 0;top:48.00px;font-size:11px;line-height:11px;font-weight:normal;color:#121a30;transform:scaleX(0.9650);">Standard</div>
<div class="r" style="left:8px;top:65px;width:13px;height:13px;background:#fff;border:1px solid #8c96aa"></div>
<div class="t" style="right:393.89px;transform-origin:100% 0;top:67.00px;font-size:11px;line-height:11px;font-weight:normal;color:#121a30;transform:scaleX(0.9650);">2276</div>
<div class="t" style="left:108.00px;transform-origin:0 0;top:67.00px;font-size:11px;line-height:11px;font-weight:normal;color:#121a30;transform:scaleX(0.9650);">Reorder</div>
<div class="t" style="left:183.00px;transform-origin:0 0;top:67.00px;font-size:11px;line-height:11px;font-weight:normal;color:#121a30;transform:scaleX(0.9650);">Maddox, Rowan</div>
<div class="t" style="right:93.89px;transform-origin:100% 0;top:67.00px;font-size:11px;line-height:11px;font-weight:normal;color:#121a30;transform:scaleX(0.9650);">$106.00</div>
<div class="t" style="left:408.40px;transform-origin:0 0;top:67.00px;font-size:11px;line-height:11px;font-weight:normal;color:#121a30;transform:scaleX(0.9650);">Standard</div>
<div class="r" style="left:8px;top:84px;width:13px;height:13px;background:#fff;border:1px solid #8c96aa"></div>
<div class="t" style="right:393.89px;transform-origin:100% 0;top:86.00px;font-size:11px;line-height:11px;font-weight:normal;color:#121a30;transform:scaleX(0.9650);">2274</div>
<div class="t" style="left:108.00px;transform-origin:0 0;top:86.00px;font-size:11px;line-height:11px;font-weight:normal;color:#121a30;transform:scaleX(0.9650);">Reorder</div>
<div class="t" style="left:183.00px;transform-origin:0 0;top:86.00px;font-size:11px;line-height:11px;font-weight:normal;color:#121a30;transform:scaleX(0.9650);">Holcomb, Cailin</div>
<div class="t" style="right:93.89px;transform-origin:100% 0;top:86.00px;font-size:11px;line-height:11px;font-weight:normal;color:#121a30;transform:scaleX(0.9650);">$118.72</div>
<div class="t" style="left:408.40px;transform-origin:0 0;top:86.00px;font-size:11px;line-height:11px;font-weight:normal;color:#121a30;transform:scaleX(0.9650);">Standard</div>
<svg class="r" style="left:9px;top:110px" width="6" height="6"><path d="M6 0v6H0z" fill="#1e2b4a"/></svg>
<div class="t" style="left:23.00px;transform-origin:0 0;top:107.00px;font-size:12px;line-height:12px;font-weight:bold;color:#121a30;transform:scaleX(0.9900);">Two Weeks Ago</div>
<div class="r" style="left:8px;top:127px;width:13px;height:13px;background:#fff;border:1px solid #8c96aa"></div>
<div class="t" style="right:393.89px;transform-origin:100% 0;top:129.00px;font-size:11px;line-height:11px;font-weight:normal;color:#121a30;transform:scaleX(0.9650);">2269</div>
<div class="t" style="left:108.00px;transform-origin:0 0;top:129.00px;font-size:11px;line-height:11px;font-weight:normal;color:#121a30;transform:scaleX(0.9650);">Reorder</div>
<div class="t" style="left:183.00px;transform-origin:0 0;top:129.00px;font-size:11px;line-height:11px;font-weight:normal;color:#121a30;transform:scaleX(0.9650);">Durham, Aubrey</div>
<div class="t" style="right:93.89px;transform-origin:100% 0;top:129.00px;font-size:11px;line-height:11px;font-weight:normal;color:#121a30;transform:scaleX(0.9650);">$16.96</div>
<div class="t" style="left:408.40px;transform-origin:0 0;top:129.00px;font-size:11px;line-height:11px;font-weight:normal;color:#121a30;transform:scaleX(0.9650);">Standard</div>
<svg class="r" style="left:9px;top:153px" width="6" height="6"><path d="M6 0v6H0z" fill="#1e2b4a"/></svg>
<div class="t" style="left:23.00px;transform-origin:0 0;top:150.00px;font-size:12px;line-height:12px;font-weight:bold;color:#121a30;transform:scaleX(0.9900);">Three Weeks Ago</div>
<div class="r" style="left:8px;top:170px;width:13px;height:13px;background:#fff;border:1px solid #8c96aa"></div>
<div class="t" style="right:393.89px;transform-origin:100% 0;top:172.00px;font-size:11px;line-height:11px;font-weight:normal;color:#121a30;transform:scaleX(0.9650);">2277</div>
<div class="t" style="left:108.00px;transform-origin:0 0;top:172.00px;font-size:11px;line-height:11px;font-weight:normal;color:#121a30;transform:scaleX(0.9650);">Reorder</div>
<div class="t" style="left:183.00px;transform-origin:0 0;top:172.00px;font-size:11px;line-height:11px;font-weight:normal;color:#121a30;transform:scaleX(0.9650);">Mcfarland, Gisela</div>
<div class="t" style="right:93.89px;transform-origin:100% 0;top:172.00px;font-size:11px;line-height:11px;font-weight:normal;color:#121a30;transform:scaleX(0.9650);">$129.32</div>
<div class="t" style="left:408.40px;transform-origin:0 0;top:172.00px;font-size:11px;line-height:11px;font-weight:normal;color:#121a30;transform:scaleX(0.9650);">Standard</div>
<svg class="r" style="left:9px;top:196px" width="6" height="6"><path d="M6 0v6H0z" fill="#1e2b4a"/></svg>
<div class="t" style="left:23.00px;transform-origin:0 0;top:193.00px;font-size:12px;line-height:12px;font-weight:bold;color:#121a30;transform:scaleX(0.9900);">Last Month</div>
<div class="r" style="left:8px;top:213px;width:13px;height:13px;background:#fff;border:1px solid #8c96aa"></div>
<div class="t" style="right:393.89px;transform-origin:100% 0;top:215.00px;font-size:11px;line-height:11px;font-weight:normal;color:#121a30;transform:scaleX(0.9650);">2275</div>
<div class="t" style="left:108.00px;transform-origin:0 0;top:215.00px;font-size:11px;line-height:11px;font-weight:normal;color:#121a30;transform:scaleX(0.9650);">Reorder</div>
<div class="t" style="left:183.00px;transform-origin:0 0;top:215.00px;font-size:11px;line-height:11px;font-weight:normal;color:#121a30;transform:scaleX(0.9650);">Jordan, Emery</div>
<div class="t" style="right:93.89px;transform-origin:100% 0;top:215.00px;font-size:11px;line-height:11px;font-weight:normal;color:#121a30;transform:scaleX(0.9650);">$137.48</div>
<div class="t" style="left:408.40px;transform-origin:0 0;top:215.00px;font-size:11px;line-height:11px;font-weight:normal;color:#121a30;transform:scaleX(0.9650);">Standard</div>
<div class="r" style="left:8px;top:232px;width:13px;height:13px;background:#fff;border:1px solid #8c96aa"></div>
<div class="t" style="right:393.89px;transform-origin:100% 0;top:234.00px;font-size:11px;line-height:11px;font-weight:normal;color:#121a30;transform:scaleX(0.9650);">2273</div>
<div class="t" style="left:108.00px;transform-origin:0 0;top:234.00px;font-size:11px;line-height:11px;font-weight:normal;color:#121a30;transform:scaleX(0.9650);">Reorder</div>
<div class="t" style="left:183.00px;transform-origin:0 0;top:234.00px;font-size:11px;line-height:11px;font-weight:normal;color:#121a30;transform:scaleX(0.9650);">Graham, Venus</div>
<div class="t" style="right:93.89px;transform-origin:100% 0;top:234.00px;font-size:11px;line-height:11px;font-weight:normal;color:#121a30;transform:scaleX(0.9650);">$103.88</div>
<div class="t" style="left:408.40px;transform-origin:0 0;top:234.00px;font-size:11px;line-height:11px;font-weight:normal;color:#121a30;transform:scaleX(0.9650);">Standard</div>
<div class="r" style="left:8px;top:251px;width:13px;height:13px;background:#fff;border:1px solid #8c96aa"></div>
<div class="t" style="right:393.89px;transform-origin:100% 0;top:253.00px;font-size:11px;line-height:11px;font-weight:normal;color:#121a30;transform:scaleX(0.9650);">2272</div>
<div class="t" style="left:108.00px;transform-origin:0 0;top:253.00px;font-size:11px;line-height:11px;font-weight:normal;color:#121a30;transform:scaleX(0.9650);">Reorder</div>
<div class="t" style="left:183.00px;transform-origin:0 0;top:253.00px;font-size:11px;line-height:11px;font-weight:normal;color:#121a30;transform:scaleX(0.9650);">Flynn, Hannah</div>
<div class="t" style="right:93.89px;transform-origin:100% 0;top:253.00px;font-size:11px;line-height:11px;font-weight:normal;color:#121a30;transform:scaleX(0.9650);">$252.28</div>
<div class="t" style="left:408.40px;transform-origin:0 0;top:253.00px;font-size:11px;line-height:11px;font-weight:normal;color:#121a30;transform:scaleX(0.9650);">Standard</div>
<div class="r" style="left:8px;top:270px;width:13px;height:13px;background:#fff;border:1px solid #8c96aa"></div>
<div class="t" style="right:393.89px;transform-origin:100% 0;top:272.00px;font-size:11px;line-height:11px;font-weight:normal;color:#121a30;transform:scaleX(0.9650);">2271</div>
<div class="t" style="left:108.00px;transform-origin:0 0;top:272.00px;font-size:11px;line-height:11px;font-weight:normal;color:#121a30;transform:scaleX(0.9650);">Reorder</div>
<div class="t" style="left:183.00px;transform-origin:0 0;top:272.00px;font-size:11px;line-height:11px;font-weight:normal;color:#121a30;transform:scaleX(0.9650);">Clements, Callie</div>
<div class="t" style="right:93.89px;transform-origin:100% 0;top:272.00px;font-size:11px;line-height:11px;font-weight:normal;color:#121a30;transform:scaleX(0.9650);">$48.76</div>
<div class="t" style="left:408.40px;transform-origin:0 0;top:272.00px;font-size:11px;line-height:11px;font-weight:normal;color:#121a30;transform:scaleX(0.9650);">Standard</div>
<div class="r" style="left:8px;top:289px;width:13px;height:13px;background:#fff;border:1px solid #8c96aa"></div>
<div class="t" style="right:393.89px;transform-origin:100% 0;top:291.00px;font-size:11px;line-height:11px;font-weight:normal;color:#121a30;transform:scaleX(0.9650);">2270</div>
<div class="t" style="left:108.00px;transform-origin:0 0;top:291.00px;font-size:11px;line-height:11px;font-weight:normal;color:#121a30;transform:scaleX(0.9650);">Reorder</div>
<div class="t" style="left:183.00px;transform-origin:0 0;top:291.00px;font-size:11px;line-height:11px;font-weight:normal;color:#121a30;transform:scaleX(0.9650);">Buchanan, Reilly</div>
<div class="t" style="right:93.89px;transform-origin:100% 0;top:291.00px;font-size:11px;line-height:11px;font-weight:normal;color:#121a30;transform:scaleX(0.9650);">$113.00</div>
<div class="t" style="left:408.40px;transform-origin:0 0;top:291.00px;font-size:11px;line-height:11px;font-weight:normal;color:#121a30;transform:scaleX(0.9650);">Standard</div>
<svg class="r" style="left:9px;top:315px" width="6" height="6"><path d="M6 0v6H0z" fill="#1e2b4a"/></svg>
<div class="t" style="left:23.00px;transform-origin:0 0;top:312.00px;font-size:12px;line-height:12px;font-weight:bold;color:#121a30;transform:scaleX(0.9900);">Older</div>
<div class="r" style="left:8px;top:332px;width:13px;height:13px;background:#fff;border:1px solid #8c96aa"></div>
<div class="t" style="right:393.89px;transform-origin:100% 0;top:334.00px;font-size:11px;line-height:11px;font-weight:normal;color:#121a30;transform:scaleX(0.9650);">2268</div>
<div class="t" style="left:108.00px;transform-origin:0 0;top:334.00px;font-size:11px;line-height:11px;font-weight:normal;color:#121a30;transform:scaleX(0.9650);">Reorder</div>
<div class="t" style="left:183.00px;transform-origin:0 0;top:334.00px;font-size:11px;line-height:11px;font-weight:normal;color:#121a30;transform:scaleX(0.9650);">Delgado, Regina</div>
<div class="t" style="right:93.89px;transform-origin:100% 0;top:334.00px;font-size:11px;line-height:11px;font-weight:normal;color:#121a30;transform:scaleX(0.9650);">$28.62</div>
<div class="t" style="left:408.40px;transform-origin:0 0;top:334.00px;font-size:11px;line-height:11px;font-weight:normal;color:#121a30;transform:scaleX(0.9650);">Standard</div>
<div class="r" style="left:8px;top:351px;width:13px;height:13px;background:#fff;border:1px solid #8c96aa"></div>
<div class="t" style="right:393.89px;transform-origin:100% 0;top:353.00px;font-size:11px;line-height:11px;font-weight:normal;color:#121a30;transform:scaleX(0.9650);">2267</div>
<div class="t" style="left:108.00px;transform-origin:0 0;top:353.00px;font-size:11px;line-height:11px;font-weight:normal;color:#121a30;transform:scaleX(0.9650);">Reorder</div>
<div class="t" style="left:183.00px;transform-origin:0 0;top:353.00px;font-size:11px;line-height:11px;font-weight:normal;color:#121a30;transform:scaleX(0.9650);">Clements, Callie</div>
<div class="t" style="right:93.89px;transform-origin:100% 0;top:353.00px;font-size:11px;line-height:11px;font-weight:normal;color:#121a30;transform:scaleX(0.9650);">$1.80</div>
<div class="t" style="left:408.40px;transform-origin:0 0;top:353.00px;font-size:11px;line-height:11px;font-weight:normal;color:#121a30;">Birthday/Anniver.</div>
<div class="r" style="left:8px;top:370px;width:13px;height:13px;background:#fff;border:1px solid #8c96aa"></div>
<div class="t" style="right:393.89px;transform-origin:100% 0;top:372.00px;font-size:11px;line-height:11px;font-weight:normal;color:#121a30;transform:scaleX(0.9650);">2266</div>
<div class="t" style="left:108.00px;transform-origin:0 0;top:372.00px;font-size:11px;line-height:11px;font-weight:normal;color:#121a30;transform:scaleX(0.9650);">Reorder</div>
<div class="t" style="left:183.00px;transform-origin:0 0;top:372.00px;font-size:11px;line-height:11px;font-weight:normal;color:#121a30;transform:scaleX(0.9650);">Clements, Callie</div>
<div class="t" style="right:93.89px;transform-origin:100% 0;top:372.00px;font-size:11px;line-height:11px;font-weight:normal;color:#121a30;transform:scaleX(0.9650);">$25.23</div>
<div class="t" style="left:408.40px;transform-origin:0 0;top:372.00px;font-size:11px;line-height:11px;font-weight:normal;color:#121a30;">Birthday/Anniver.</div>
<div class="r" style="left:8px;top:389px;width:13px;height:13px;background:#fff;border:1px solid #8c96aa"></div>
<div class="r" style="left:8px;top:408px;width:13px;height:13px;background:#fff;border:1px solid #8c96aa"></div>
</div>
<div class="r" style="left:759px;top:237px;width:17px;height:390px;background:#d5d9e6"></div>
<svg class="r" style="left:763px;top:243px" width="9" height="5" viewBox="0 0 9 5"><path d="M0 5L4.5 0 9 5z" fill="#6f7a8e"/></svg>
<div class="r" style="left:763px;top:255px;width:9px;height:78px;background:#a4adbe"></div>
<svg class="r" style="left:763px;top:617px" width="9" height="4" viewBox="0 0 9 4"><path d="M0 0h9L4.5 4z" fill="#6f7a8e"/></svg>
<div class="r" style="left:266px;top:627px;width:510px;height:1px;background:#aab1c2"></div>
<div class="r" style="left:597px;top:631px;width:72px;height:23px;background:#fff;border:1px solid #a3abbd"></div>
<div class="t" style="right:124.33px;transform-origin:100% 0;top:637.00px;font-size:12px;line-height:12px;font-weight:bold;color:#1e2b4a;">$4,976.43</div>
<svg class="r" style="left:271px;top:662px" width="5" height="9" viewBox="0 0 5 9"><path d="M5 0v9L0 4.5z" fill="#6f7a8e"/></svg>
<div class="r" style="left:283px;top:662px;width:344px;height:9px;background:#a4adbe"></div>
<svg class="r" style="left:765px;top:662px" width="5" height="9" viewBox="0 0 5 9"><path d="M0 0v9l5-4.5z" fill="#6f7a8e"/></svg>
<svg class="r" style="left:268px;top:200px" width="20" height="26" viewBox="0 0 20 26"><path d="M4.5 4.5V20.5L8.5 16.5 11 22.5 13.5 21.5 11.5 16.5H16Z" fill="#fff" stroke="#000" stroke-width="1.1" stroke-linejoin="miter"/></svg>
</body></html>
